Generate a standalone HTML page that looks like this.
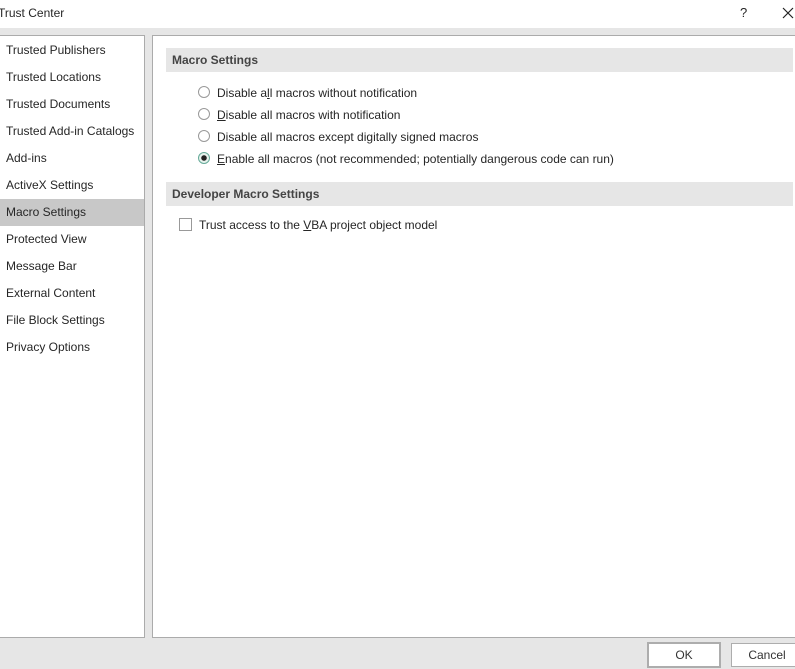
<!DOCTYPE html><html><head><style>
body{margin:0;width:795px;height:669px;overflow:hidden;background:#e6e6e6;font-family:"Liberation Sans",sans-serif;font-size:12px;color:#262626;position:relative}
.a{position:absolute}
.title{left:0;top:0;width:795px;height:28px;background:#fff}
.nav{left:0;top:35px;width:144px;height:601px;background:#fff;border:1px solid #ababab;border-left:none}
.nav div{position:absolute;left:6px;height:27px;line-height:27px;width:138px}
.main{left:152px;top:35px;width:645px;height:601px;background:#fff;border:1px solid #ababab;border-right:none}
.hdr{background:#e6e6e6;font-weight:bold;color:#444;height:24px;line-height:24px;padding-left:6px}
.r{width:10px;height:10px;border:1px solid #999;border-radius:50%;background:#fff}
.btn{height:22px;border:2px solid #adadad;background:#fff;text-align:center;line-height:22px;color:#333}
u{text-decoration:underline}
</style></head><body>
<div class="a title"><span class="a" style="left:-2px;top:6px">Trust Center</span><span class="a" style="left:740px;top:5px;font-size:13px">?</span>
<svg class="a" style="left:782px;top:7px" width="12" height="12"><path d="M1 1L11 11M11 1L1 11" stroke="#222" stroke-width="1.2"/></svg></div>
<div class="a nav">
<div style="top:1px">Trusted Publishers</div>
<div style="top:28px">Trusted Locations</div>
<div style="top:55px">Trusted Documents</div>
<div style="top:82px">Trusted Add-in Catalogs</div>
<div style="top:109px">Add-ins</div>
<div style="top:136px">ActiveX Settings</div>
<div style="top:163px;left:0;padding-left:6px;background:#c8c8c8">Macro Settings</div>
<div style="top:190px">Protected View</div>
<div style="top:217px">Message Bar</div>
<div style="top:244px">External Content</div>
<div style="top:271px">File Block Settings</div>
<div style="top:298px">Privacy Options</div>
</div>
<div class="a main">
<div class="a hdr" style="left:13px;top:12px;width:621px">Macro Settings</div>
<div class="a r" style="left:45px;top:50px"></div><span class="a" style="left:64px;top:50px">Disable a<u>l</u>l macros without notification</span>
<div class="a r" style="left:45px;top:72px"></div><span class="a" style="left:64px;top:72px"><u>D</u>isable all macros with notification</span>
<div class="a r" style="left:45px;top:94px"></div><span class="a" style="left:64px;top:94px">Disable all macros except digitally signed macros</span>
<div class="a r" style="left:45px;top:116px;border-color:#6a9;background:radial-gradient(circle,#222 0 2.5px,#e6f2ec 3px)"></div><span class="a" style="left:64px;top:116px"><u>E</u>nable all macros (not recommended; potentially dangerous code can run)</span>
<div class="a hdr" style="left:13px;top:146px;width:621px">Developer Macro Settings</div>
<div class="a" style="left:26px;top:182px;width:11px;height:11px;border:1px solid #999"></div><span class="a" style="left:46px;top:182px">Trust access to the <u>V</u>BA project object model</span>
</div>
<div class="a btn" style="left:647px;top:642px;width:70px">OK</div>
<div class="a btn" style="left:731px;top:642px;width:70px;border:1px solid #adadad;top:643px">Cancel</div>
</body></html>
